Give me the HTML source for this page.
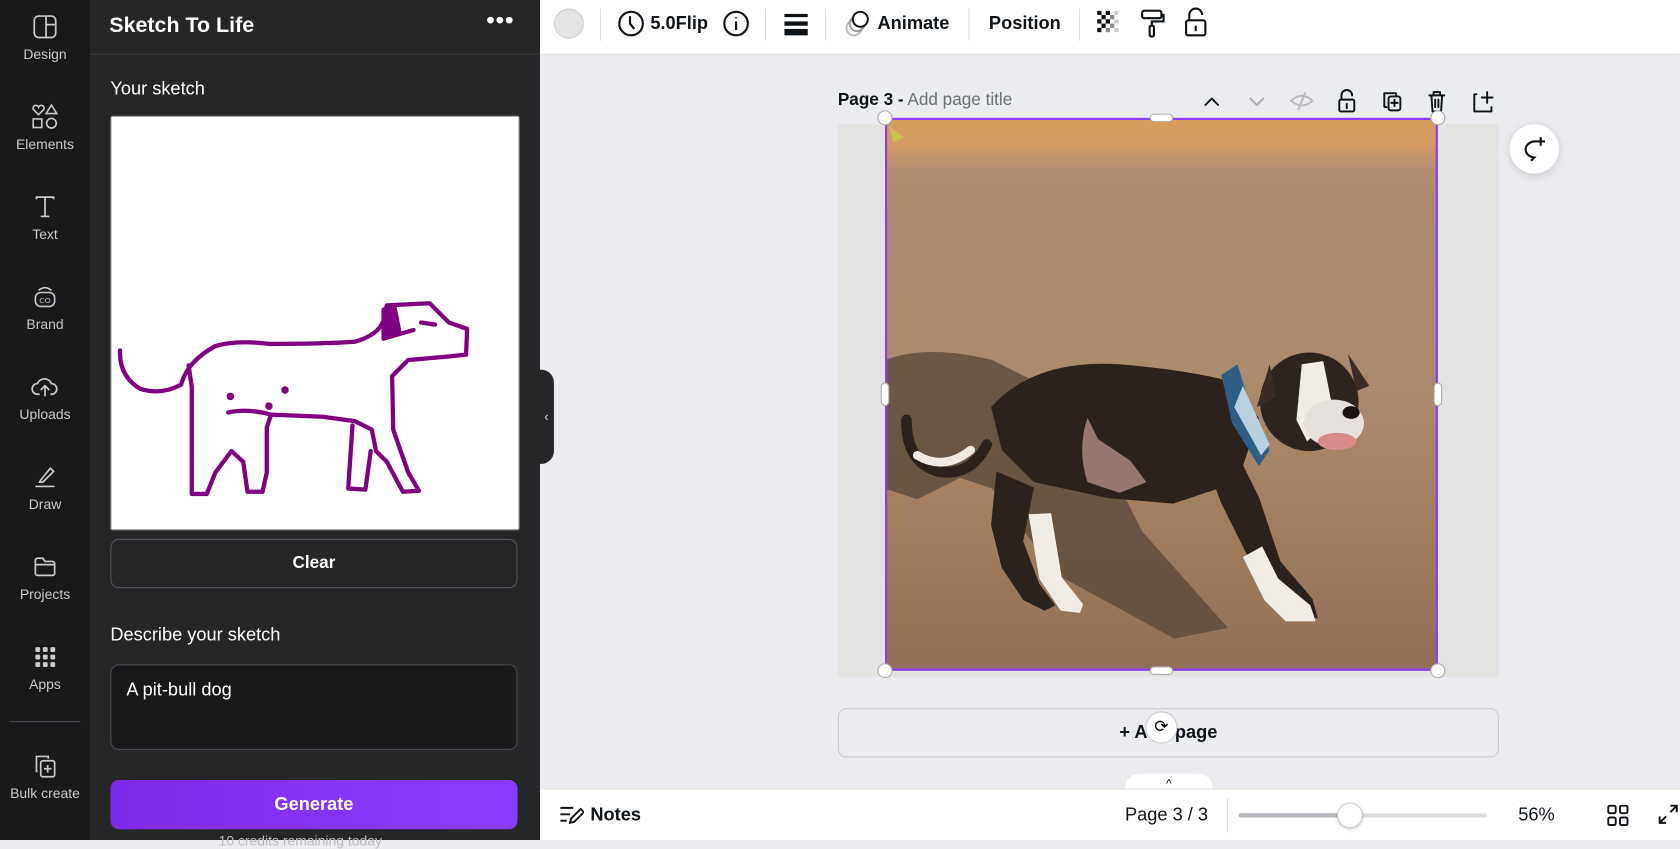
<!DOCTYPE html>
<html><head><meta charset="utf-8"><style>
*{margin:0;padding:0;box-sizing:border-box}
html,body{width:1680px;height:840px;overflow:hidden;background:#ebecf0;font-family:"Liberation Sans",sans-serif}
#w{position:absolute;left:0;top:0;width:1568px;height:784px;transform:scale(1.071429);transform-origin:0 0;background:#ebecf0}
.a{position:absolute}
.rail{left:0;top:0;width:84px;height:784px;background:#18191b}
.ri{position:absolute;left:0;width:84px;text-align:center;color:#c9cacc;font-size:13px}
.ri svg{display:block;margin:0 auto 6px}
.panel{left:84px;top:0;width:420px;height:784px;background:#252627}
.btn{border:1px solid #55575a;border-radius:8px;color:#fff;font-size:16px;font-weight:bold;text-align:center}
.tb{color:#0e1318;font-size:17px;font-weight:bold}
.sep{position:absolute;top:8px;width:1px;height:30px;background:#dcdde0}
</style></head><body><div id="w">
<div class="a rail">
 <div class="ri" style="top:13px"><svg width="24" height="24" viewBox="0 0 24 24" fill="none" stroke="#c9cacc" stroke-width="1.6"><rect x="2" y="2" width="20" height="20" rx="4"/><path d="M13 2v20M13 10h9"/></svg>Design</div>
 <div class="ri" style="top:97px"><svg width="26" height="24" viewBox="0 0 26 24" fill="none" stroke="#c9cacc" stroke-width="1.5"><path d="M7 10 2 5a2.5 2.5 0 0 1 5-2 2.5 2.5 0 0 1 5 2z"/><path d="M19 1l5 8h-10z"/><rect x="2" y="14" width="8" height="8"/><circle cx="19" cy="18" r="4.5"/></svg>Elements</div>
 <div class="ri" style="top:181px"><svg width="24" height="24" viewBox="0 0 24 24" fill="none" stroke="#c9cacc" stroke-width="1.6"><path d="M4 5V3h16v2M12 3v18M8 21h8"/></svg>Text</div>
 <div class="ri" style="top:265px"><svg width="24" height="24" viewBox="0 0 24 24" fill="none" stroke="#c9cacc" stroke-width="1.5"><rect x="3" y="8" width="18" height="13" rx="5"/><path d="M6 6q6-5 12 0"/><text x="12" y="18" font-size="7" fill="#c9cacc" stroke="none" text-anchor="middle" font-family="Liberation Sans">CO</text></svg>Brand</div>
 <div class="ri" style="top:349px"><svg width="26" height="24" viewBox="0 0 26 24" fill="none" stroke="#c9cacc" stroke-width="1.6"><path d="M8 19H6a5 5 0 0 1 0-10 7 7 0 0 1 13 0 5 5 0 0 1 0 10h-1M13 21v-9M9 15l4-4 4 4"/></svg>Uploads</div>
 <div class="ri" style="top:433px"><svg width="24" height="24" viewBox="0 0 24 24" fill="none" stroke="#c9cacc" stroke-width="1.6"><path d="M8 15 17 4l3 3-10 10H7zM3 21h18"/></svg>Draw</div>
 <div class="ri" style="top:517px"><svg width="24" height="24" viewBox="0 0 24 24" fill="none" stroke="#c9cacc" stroke-width="1.6"><path d="M3 6a2 2 0 0 1 2-2h5l2 3h7a2 2 0 0 1 2 2v9a2 2 0 0 1-2 2H5a2 2 0 0 1-2-2zM3 10h18"/></svg>Projects</div>
 <div class="ri" style="top:601px"><svg width="24" height="24" viewBox="0 0 24 24" fill="#c9cacc"><rect x="3" y="3" width="4.5" height="4.5" rx="1"/><rect x="10" y="3" width="4.5" height="4.5" rx="1"/><rect x="17" y="3" width="4.5" height="4.5" rx="1"/><rect x="3" y="10" width="4.5" height="4.5" rx="1"/><rect x="10" y="10" width="4.5" height="4.5" rx="1"/><rect x="17" y="10" width="4.5" height="4.5" rx="1"/><rect x="3" y="17" width="4.5" height="4.5" rx="1"/><rect x="10" y="17" width="4.5" height="4.5" rx="1"/><rect x="17" y="17" width="4.5" height="4.5" rx="1"/></svg>Apps</div>
 <div class="a" style="left:9px;top:673px;width:66px;height:1px;background:#4a4b4e"></div>
 <div class="ri" style="top:703px"><svg width="24" height="24" viewBox="0 0 24 24" fill="none" stroke="#c9cacc" stroke-width="1.6"><path d="M5 17H4V3h11v2"/><rect x="8" y="7" width="13" height="15" rx="2"/><path d="M14.5 11v7M11 14.5h7"/></svg>Bulk create</div>
</div>
<div class="a panel">
 <div class="a" style="left:18px;top:13px;color:#fff;font-size:20px;font-weight:bold">Sketch To Life</div>
 <div class="a" style="left:370px;top:6px;color:#fff;font-size:22px;font-weight:bold;letter-spacing:1px">•••</div>
 <div class="a" style="left:0;top:50px;width:420px;height:1px;background:#3c3d40"></div>
 <div class="a" style="left:19px;top:73px;color:#fff;font-size:17px">Your sketch</div>
 <div class="a" style="left:19px;top:108px;width:382px;height:387px;background:#fff;border:1px solid #888;border-radius:2px;overflow:hidden">
  <svg width="382" height="387" viewBox="103 108 382 387" fill="none" stroke="#800080" stroke-width="4" stroke-linejoin="round" stroke-linecap="round">
   <path d="M111 326Q110 350 130 362Q150 368 168 358 174 336 200 322 220 316 250 320 300 320 330 318 352 312 357 298L360 284 400 282 418 300 435 306 434 330 415 332 380 335 365 350 366 400 380 440 390 457 375 458 360 430 350 420 346 400 330 392 300 388 252 386 248 398 248 440 244 458 230 458 226 430 215 420 200 440 192 460 178 460 178 420 178 360 175 340"/>
   <path d="M212 384Q230 380 252 386M328 396 324 455 340 456 345 420"/>
   <path d="M357 288 367 285 372 310 357 315Z" fill="#800080"/>
   <path d="M357 315 385 307M392 300 405 302"/>
   <circle cx="214" cy="369" r="1.5" fill="#800080"/><circle cx="265" cy="363" r="1.5" fill="#800080"/><circle cx="250" cy="378" r="1.5" fill="#800080"/>
  </svg>
 </div>
 <div class="a btn" style="left:19px;top:503px;width:380px;height:46px;line-height:44px">Clear</div>
 <div class="a" style="left:19px;top:583px;color:#fff;font-size:17px">Describe your sketch</div>
 <div class="a" style="left:19px;top:620px;width:380px;height:80px;background:#18191b;border:1px solid #4a4b4e;border-radius:8px;color:#fff;font-size:17px;padding:13px 14px">A pit-bull dog</div>
 <div class="a" style="left:19px;top:728px;width:380px;height:46px;background:linear-gradient(90deg,#7d2ae8,#8b3dff);border-radius:8px;color:#fff;font-size:17px;font-weight:bold;text-align:center;line-height:46px">Generate</div>
 <div class="a" style="left:120px;top:777px;color:#bbb;font-size:13px">10 credits remaining today</div>
</div>
<div class="a" style="left:503px;top:345px;width:14px;height:88px;background:#252627;border-radius:0 12px 12px 0;color:#ddd;font-size:12px;line-height:88px;text-align:center">‹</div>
<div class="a" style="left:504px;top:0;width:1064px;height:50px;background:#fff;box-shadow:0 1px 2px rgba(0,0,0,.08)">
 <div class="a" style="left:13px;top:8px;width:28px;height:28px;border-radius:50%;background:#e3e4e3;border:1px solid #ccc"></div>
 <div class="sep" style="left:56px"></div>
 <svg class="a" style="left:72px;top:9px" width="26" height="26" viewBox="0 0 26 26" fill="none" stroke="#0e1318" stroke-width="2"><circle cx="13" cy="13" r="11"/><path d="M12 6v7l4 5"/></svg>
 <div class="a tb" style="left:103px;top:12px">5.0Flip</div>
 <svg class="a" style="left:170px;top:9px" width="26" height="26" viewBox="0 0 26 26" fill="none" stroke="#0e1318" stroke-width="2"><circle cx="13" cy="13" r="11"/><path d="M13 11v8M13 7v1"/></svg>
 <div class="sep" style="left:210px"></div>
 <svg class="a" style="left:228px;top:12px" width="22" height="22" viewBox="0 0 22 22" fill="#0e1318"><rect x="0" y="1" width="22" height="3"/><rect x="0" y="8" width="22" height="4"/><rect x="0" y="15" width="22" height="6"/></svg>
 <div class="sep" style="left:266px"></div>
 <svg class="a" style="left:284px;top:8px" width="26" height="28" viewBox="0 0 26 28" fill="none" stroke-width="1.8"><circle cx="9" cy="18" r="7" stroke="#bbb"/><circle cx="12" cy="14" r="7" stroke="#999"/><circle cx="15" cy="10" r="7" stroke="#0e1318" fill="#fff"/></svg>
 <div class="a tb" style="left:315px;top:12px">Animate</div>
 <div class="sep" style="left:400px"></div>
 <div class="a tb" style="left:419px;top:12px">Position</div>
 <div class="sep" style="left:503px"></div>
 <svg class="a" style="left:520px;top:10px" width="24" height="24" viewBox="0 0 24 24"><g fill="#111"><rect x="0" y="0" width="4" height="4"/><rect x="8" y="0" width="4" height="4"/><rect x="4" y="4" width="4" height="4"/><rect x="0" y="8" width="4" height="4"/><rect x="8" y="8" width="4" height="4"/><rect x="4" y="12" width="4" height="4"/><rect x="0" y="16" width="4" height="4"/></g><g fill="#888"><rect x="12" y="4" width="4" height="4"/><rect x="12" y="12" width="4" height="4"/><rect x="8" y="16" width="4" height="4"/></g><g fill="#ccc"><rect x="16" y="0" width="4" height="4"/><rect x="16" y="8" width="4" height="4"/><rect x="16" y="16" width="4" height="4"/></g></svg>
 <svg class="a" style="left:560px;top:8px" width="24" height="28" viewBox="0 0 24 28" fill="none" stroke="#0e1318" stroke-width="2"><rect x="2" y="2" width="18" height="7" rx="2"/><path d="M20 6h2v6H11v4"/><rect x="9" y="16" width="4" height="10" rx="1.5"/></svg>
 <svg class="a" style="left:600px;top:7px" width="24" height="28" viewBox="0 0 24 28" fill="none" stroke="#0e1318" stroke-width="2"><path d="M6 12V7a6 6 0 0 1 12 0"/><rect x="3" y="12" width="18" height="14" rx="2"/><path d="M12 17v5"/></svg>
</div>
<div class="a" style="left:782px;top:85px;font-size:16px;color:#0e1318"><b>Page 3 -</b> <span style="color:#6b6f76">Add page title</span></div>
<svg class="a" style="left:1120px;top:82px" width="280" height="26" viewBox="0 0 280 26" fill="none" stroke-width="1.8" stroke-linecap="round" stroke-linejoin="round">
 <path d="M5 16l6-6 6 6" stroke="#0e1318"/>
 <path d="M47 10l6 6 6-6" stroke="#aaa"/>
 <path d="M85 12q10-9 20 0q-10 9-20 0M98 5l-6 15" stroke="#bbb"/>
 <path d="M132 10V7a5 5 0 0 1 10 0" stroke="#0e1318"/><rect x="130" y="11" width="14" height="11" rx="1.5" stroke="#0e1318"/><path d="M137 15v4" stroke="#0e1318"/>
 <rect x="176" y="8" width="11" height="13" rx="2" stroke="#0e1318"/><path d="M174 18h-1a1 1 0 0 1-1-1V5h11v2M181.5 11v6M178.5 14h6" stroke="#0e1318"/>
 <path d="M214 7h14M218 7V4h6v3M216 7l1 15h8l1-15M219.5 11v7M222.5 11v7" stroke="#0e1318"/>
 <path d="M258 6h-2v16h16v-4M268 4v10M263 9h10" stroke="#0e1318"/>
</svg>
<div class="a" style="left:782px;top:116px;width:617px;height:516px;background:#e3e4e1"></div>
<div class="a" style="left:826px;top:110px;width:516px;height:516px;overflow:hidden;background:linear-gradient(180deg,#d99c5c 0%,#d49a62 5%,#b48f72 9%,#a88a72 20%,#ab8b6e 45%,#a3805f 70%,#8f7058 100%)">
 <svg width="516" height="516" viewBox="826 110 516 516">
  <path d="M826 336q40-15 100 0l80 40 60 120 80 90-50 10-110-60-60-80-30-10-40 20-30-10z" fill="#5a4a3c" opacity=".8"/>
  <path d="M846 392q0 40 30 48 30 5 45-25" fill="none" stroke="#2b211d" stroke-width="10" stroke-linecap="round"/>
  <path d="M856 425q25 15 50-5" fill="none" stroke="#efebe4" stroke-width="8" stroke-linecap="round"/>
  <path d="M925 380q40-45 120-40 60 5 100 15l30 35-20 60-60 20-60-5-70-15-30-30z" fill="#2b211d"/>
  <path d="M930 440l-5 50 10 40 20 30 20 10 10-5-15-20-15-40 10-50z" fill="#2b211d"/>
  <path d="M960 480l10 60 20 30 18 2 3-8-20-25-10-60z" fill="#f1ede6"/>
  <path d="M1125 430l15 40 30 60 30 45 30 2-5-18-30-35-20-60-20-40z" fill="#2b211d"/>
  <path d="M1160 520l20 40 20 20 28 0-5-15-30-25-15-30z" fill="#f1ece6"/>
  <path d="M1015 390q-10 30 0 60l30 10 25-10-15-20-30-20z" fill="#d9b0a8" opacity=".6"/>
  <path d="M1140 350l15-10 15 50 15 30-10 15-25-40z" fill="#2c5e86"/>
  <path d="M1160 360l25 55-8 10-25-45z" fill="#b9d0de"/>
  <circle cx="1222" cy="375" r="46" fill="#2d2420"/>
  <path d="M1185 340l-12 40 18-10zM1258 330l20 30-12 5z" fill="#3a2c25"/>
  <path d="M1215 340l20-3 10 50-25 25-10-20z" fill="#f0ece6"/>
  <ellipse cx="1245" cy="395" rx="28" ry="22" fill="#e5e0dc"/>
  <ellipse cx="1248" cy="412" rx="18" ry="8" fill="#d98a8a"/>
  <ellipse cx="1261" cy="385" rx="8" ry="6" fill="#1a1210"/>
  <path d="M830 118q5 5 14 10l-10 5z" fill="#c9c24a"/>
 </svg>
</div>
<div class="a" style="left:826px;top:110px;width:516px;height:516px;border:2px solid #8b3dff"></div>
<div class="a" style="left:819px;top:103px;width:14px;height:14px;border-radius:50%;background:#fff;border:1px solid #aaa"></div>
<div class="a" style="left:1335px;top:103px;width:14px;height:14px;border-radius:50%;background:#fff;border:1px solid #aaa"></div>
<div class="a" style="left:819px;top:619px;width:14px;height:14px;border-radius:50%;background:#fff;border:1px solid #aaa"></div>
<div class="a" style="left:1335px;top:619px;width:14px;height:14px;border-radius:50%;background:#fff;border:1px solid #aaa"></div>
<div class="a" style="left:1073px;top:106px;width:22px;height:8px;border-radius:4px;background:#fff;border:1px solid #aaa"></div>
<div class="a" style="left:1073px;top:622px;width:22px;height:8px;border-radius:4px;background:#fff;border:1px solid #aaa"></div>
<div class="a" style="left:822px;top:357px;width:8px;height:22px;border-radius:4px;background:#fff;border:1px solid #aaa"></div>
<div class="a" style="left:1338px;top:357px;width:8px;height:22px;border-radius:4px;background:#fff;border:1px solid #aaa"></div>
<div class="a" style="left:1409px;top:116px;width:46px;height:46px;border-radius:50%;background:#fff;box-shadow:0 2px 8px rgba(0,0,0,.15)"><svg style="position:absolute;left:10px;top:10px" width="26" height="26" viewBox="0 0 26 26" fill="none" stroke="#0e1318" stroke-width="2"><path d="M15 6a9 7.5 0 1 0-2 15l-3 3M19 2v8M15 6h8"/></svg></div>
<div class="a" style="left:782px;top:661px;width:617px;height:46px;border:1px solid #c8cacd;border-radius:8px;text-align:center;line-height:44px;font-size:17px;font-weight:bold;color:#0e1318">+ Add page</div>
<div class="a" style="left:1069px;top:664px;width:30px;height:30px;border-radius:50%;background:#fff;border:1px solid #ccc;text-align:center;line-height:28px;font-size:16px">⟳</div>
<div class="a" style="left:1050px;top:722px;width:82px;height:18px;background:#fff;border-radius:14px 14px 0 0;text-align:center;font-size:11px;line-height:20px">^</div>
<div class="a" style="left:504px;top:736px;width:1064px;height:48px;background:#fff;border-top:1px solid #e4e5e7">
 <svg class="a" style="left:17px;top:13px" width="24" height="22" viewBox="0 0 24 22" fill="none" stroke="#0e1318" stroke-width="1.8"><path d="M2 4h12M2 10h9M2 16h6M11 18l1-4 9-9 3 3-9 9z"/></svg>
 <div class="a tb" style="left:47px;top:14px">Notes</div>
 <div class="a" style="left:546px;top:14px;font-size:17px;color:#0e1318">Page 3 / 3</div>
 <div class="a" style="left:641px;top:8px;width:1px;height:32px;background:#ddd"></div>
 <div class="a" style="left:652px;top:22px;width:232px;height:4px;border-radius:2px;background:#dcdde0"></div>
 <div class="a" style="left:652px;top:22px;width:103px;height:4px;border-radius:2px;background:#b5b8bd"></div>
 <div class="a" style="left:744px;top:12px;width:24px;height:24px;border-radius:50%;background:#fff;border:1px solid #ccc;box-shadow:0 1px 3px rgba(0,0,0,.2)"></div>
 <div class="a" style="left:913px;top:14px;font-size:17px;color:#0e1318">56%</div>
 <svg class="a" style="left:996px;top:14px" width="20" height="20" viewBox="0 0 20 20" fill="none" stroke="#0e1318" stroke-width="1.8"><rect x="1" y="1" width="7" height="7" rx="1.5"/><rect x="12" y="1" width="7" height="7" rx="1.5"/><rect x="1" y="12" width="7" height="7" rx="1.5"/><rect x="12" y="12" width="7" height="7" rx="1.5"/></svg>
 <svg class="a" style="left:1042px;top:12px" width="22" height="22" viewBox="0 0 22 22" fill="none" stroke="#0e1318" stroke-width="1.8"><path d="M13 3h6v6M19 3l-6 6M9 19H3v-6M3 19l6-6"/></svg>
</div>
</div></body></html>
